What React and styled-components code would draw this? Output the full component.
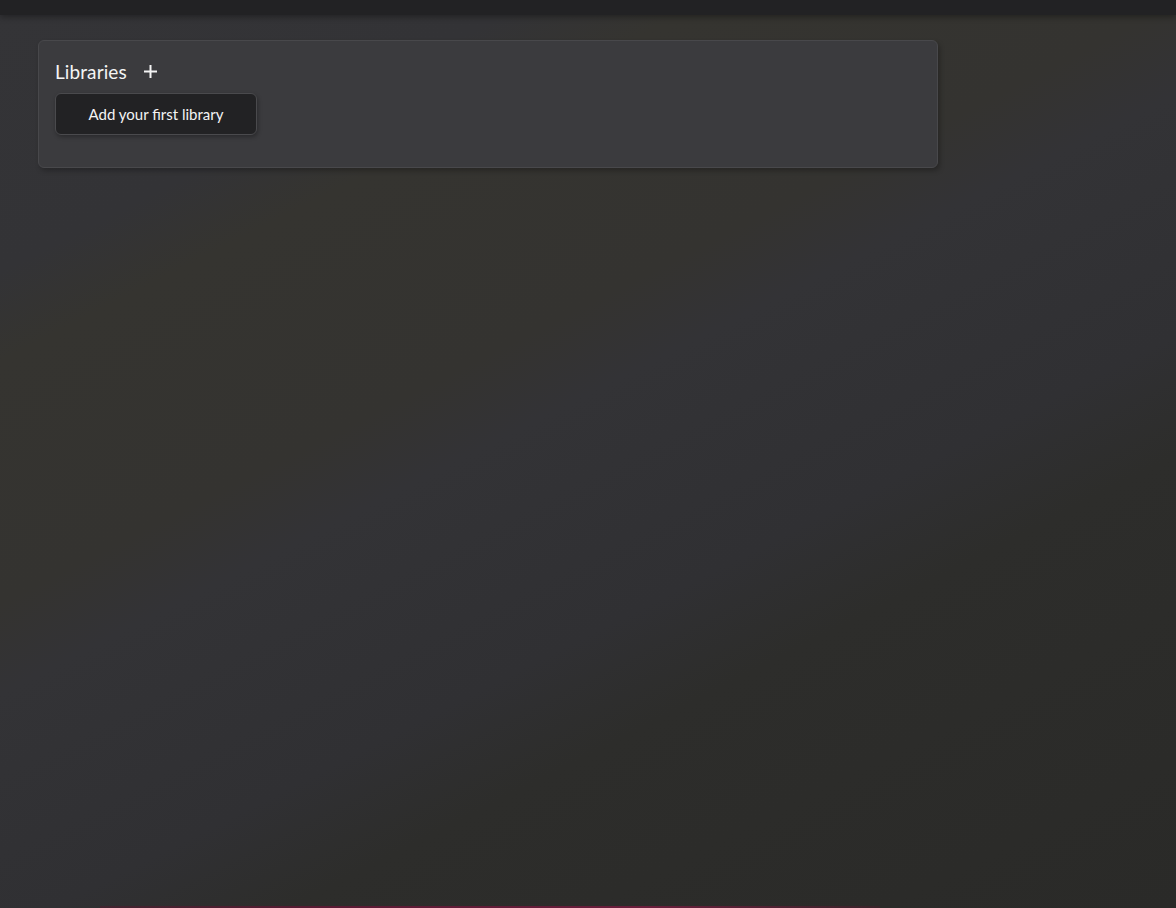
import React from 'react';
import styled, { createGlobalStyle } from 'styled-components';

const Global = createGlobalStyle`
  html, body {
    margin: 0;
    height: 100%;
  }
  body {
    font-family: Lato, "Noto Sans", sans-serif;
    color: #f2f2f2;
    background: #2f2f31;
  }
  #root {
    height: 100%;
  }
`;

const Page = styled.div`
  position: relative;
  height: 908px;
  overflow: hidden;
  display: flex;
  flex-direction: column;
  background: linear-gradient(
    153deg,
    #343437 0%,
    #333336 18%,
    #353430 24%,
    #343330 40%,
    #333336 46%,
    #303033 62%,
    #2d2d2b 70%,
    #2a2a28 100%
  );
`;

const TopBar = styled.header`
  height: 15px;
  flex: none;
  background: #222224;
  box-shadow: 0 2px 6px rgba(0, 0, 0, 0.35);
`;

const Content = styled.main`
  flex: 1;
  padding: 25px 38px;
`;

const Card = styled.section`
  width: 900px;
  box-sizing: border-box;
  padding: 18px 16px 32px;
  background: #3b3b3e;
  border: 1px solid #48484b;
  border-radius: 6px;
  box-shadow: 2px 3px 5px rgba(0, 0, 0, 0.25);
  display: flex;
  flex-direction: column;
  align-items: flex-start;
  gap: 10px;
`;

const TitleRow = styled.div`
  display: flex;
  align-items: center;
  gap: 16px;
  height: 24px;
`;

const Title = styled.h2`
  margin: 0;
  font-size: 19px;
  font-weight: 400;
  color: #f4f4f4;
  letter-spacing: 0.1px;
`;

const IconButton = styled.button`
  display: flex;
  align-items: center;
  justify-content: center;
  padding: 0;
  width: 16px;
  height: 16px;
  border: 0;
  background: none;
  color: #f4f4f4;
  cursor: pointer;
`;

const Button = styled.button`
  width: 202px;
  height: 42px;
  border: 1px solid #4a4a4d;
  border-radius: 6px;
  background: #222224;
  color: #f4f4f4;
  font-family: Lato, "Noto Sans", sans-serif;
  font-size: 15px;
  box-shadow: 1px 2px 4px rgba(0, 0, 0, 0.3);
  cursor: pointer;
`;

const BottomLine = styled.div`
  position: absolute;
  left: 100px;
  width: 780px;
  bottom: 0;
  height: 2px;
  background: linear-gradient(90deg, rgba(90, 20, 45, 0.4), #5a1a34 30%, #6a1e3c 70%, rgba(90, 20, 45, 0.3));
`;

const Plus = () => (
  <svg width="15" height="15" viewBox="0 0 15 15" fill="none">
    <path d="M7.5 1v13M1 7.5h13" stroke="currentColor" strokeWidth="2" />
  </svg>
);

export default function App() {
  return (
    <>
      <Global />
      <Page>
        <TopBar />
        <Content>
          <Card>
            <TitleRow>
              <Title>Libraries</Title>
              <IconButton aria-label="Add library">
                <Plus />
              </IconButton>
            </TitleRow>
            <Button>Add your first library</Button>
          </Card>
        </Content>
        <BottomLine />
      </Page>
    </>
  );
}
